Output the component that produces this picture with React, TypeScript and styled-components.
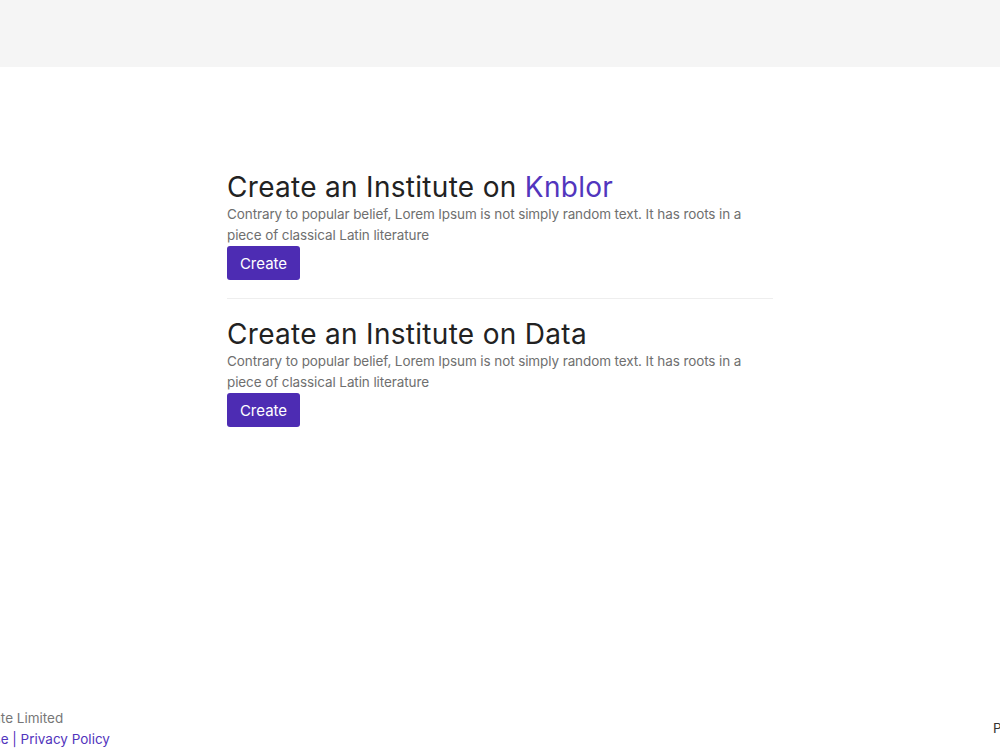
import React from "react";
import styled, { createGlobalStyle } from "styled-components";

const Global = createGlobalStyle`
  html, body { margin: 0; padding: 0; background: #fff; overflow: hidden; }
  body { font-family: Inter, "Noto Sans", sans-serif; }
`;

const Page = styled.div`
  width: 1000px;
  height: 750px;
  display: flex;
  flex-direction: column;
  overflow: hidden;
`;

const Header = styled.header`
  height: 67px;
  background: #f5f5f5;
  flex: none;
`;

const Main = styled.main`
  flex: 1;
  display: flex;
  justify-content: center;
  padding-top: 103px;
`;

const Container = styled.div`
  width: 546px;
  display: flex;
  flex-direction: column;
`;

const Section = styled.section`
  display: flex;
  flex-direction: column;
  align-items: flex-start;
`;

const Title = styled.h2`
  margin: 0;
  font-size: 28px;
  font-weight: 400;
  line-height: 34px;
  color: #222;
  letter-spacing: 0.3px;
`;

const Brand = styled.span`
  color: #5235bd;
`;

const Text = styled.p`
  margin: 0;
  font-size: 13.5px;
  line-height: 21px;
  color: #6f6f6f;
  letter-spacing: -0.1px;
  max-width: 522px;
`;

const Button = styled.button`
  height: 34px;
  width: 73px;
  border: none;
  border-radius: 3px;
  background: #4d2cb3;
  color: #fff;
  font-family: inherit;
  font-size: 15px;
  cursor: pointer;
`;

const Divider = styled.hr`
  border: none;
  border-top: 1px solid #eee;
  margin: 18px 0 18px;
  width: 100%;
`;

const Footer = styled.footer`
  flex: none;
  height: 54px;
  display: flex;
  justify-content: space-between;
  align-items: flex-start;
  margin: 0 -114px 0 -77px;
  font-size: 13.5px;
  line-height: 21px;
  padding-top: 12px;
  box-sizing: border-box;
`;

const FooterLeft = styled.div`
  display: flex;
  flex-direction: column;
  color: #777;
`;

const FooterLinks = styled.div`
  color: #5235bd;
`;

const FooterLink = styled.a`
  color: #5235bd;
  text-decoration: none;
`;

const FooterRight = styled.div`
  color: #333;
  padding-top: 10px;
`;

const items = [
  { title: "Create an Institute on ", brand: "Knblor" },
  { title: "Create an Institute on Data", brand: "" },
];

export default function App() {
  return (
    <>
      <Global />
      <Page>
        <Header />
        <Main>
          <Container>
            {items.map((it, i) => (
              <React.Fragment key={i}>
                {i > 0 && <Divider />}
                <Section>
                  <Title>
                    {it.title}
                    {it.brand && <Brand>{it.brand}</Brand>}
                  </Title>
                  <Text>
                    Contrary to popular belief, Lorem Ipsum is not simply random
                    text. It has roots in a piece of classical Latin literature
                  </Text>
                  <Button>Create</Button>
                </Section>
              </React.Fragment>
            ))}
          </Container>
        </Main>
        <Footer>
          <FooterLeft>
            <span>Knblor Private Limited</span>
            <FooterLinks>
              <FooterLink href="#">Terms of Use</FooterLink> |{" "}
              <FooterLink href="#">Privacy Policy</FooterLink>
            </FooterLinks>
          </FooterLeft>
          <FooterRight>Powered by Knblor</FooterRight>
        </Footer>
      </Page>
    </>
  );
}
